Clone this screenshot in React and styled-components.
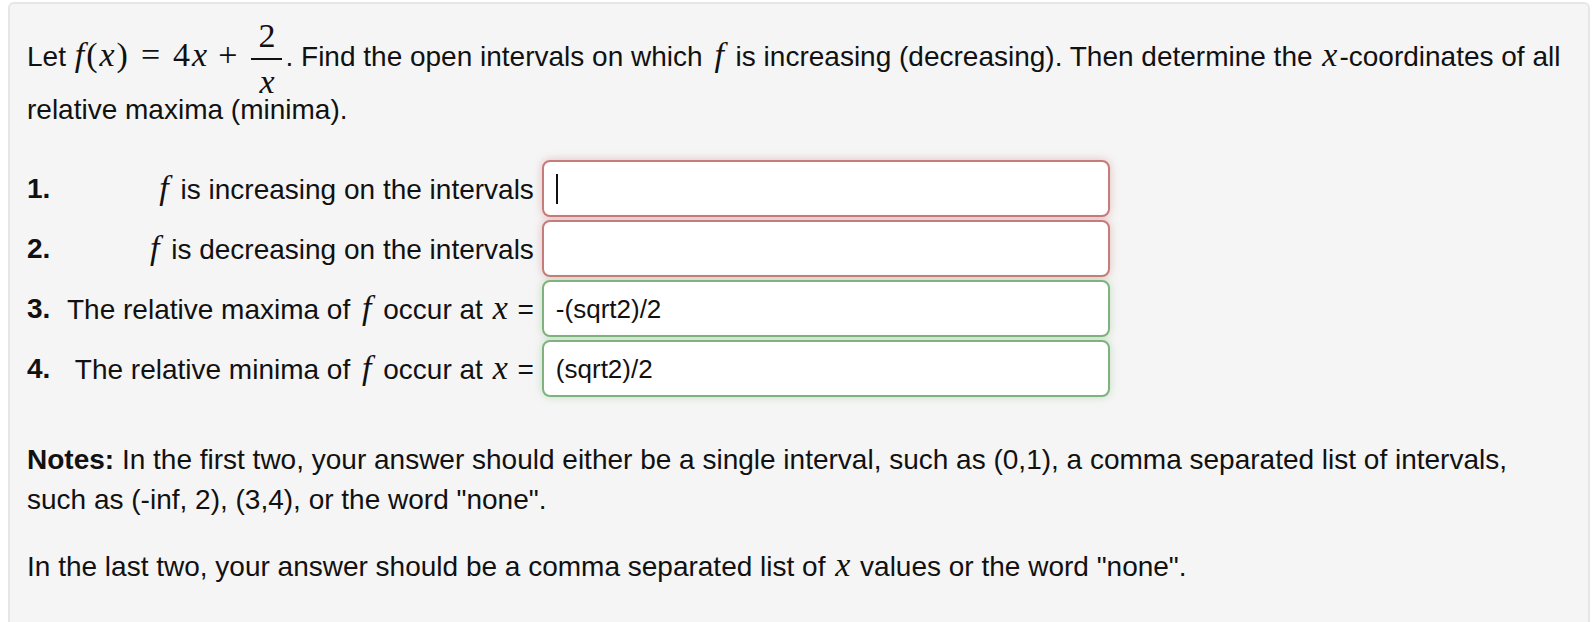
import React from "react"
import styled, { createGlobalStyle } from "styled-components"

const GlobalStyle = createGlobalStyle`
  html, body {
    margin: 0;
    padding: 0;
    background: #ffffff;
  }
  body {
    font-family: "Liberation Sans", Arial, Helvetica, sans-serif;
    color: #111;
  }
`

const rows = [
  { num: "1.", pre: "", post: "is increasing on the intervals", value: "", status: "wrong", caret: true },
  { num: "2.", pre: "", post: "is decreasing on the intervals", value: "", status: "wrong" },
  { num: "3.", pre: "The relative maxima of", post: "occur at", x: true, value: "-(sqrt2)/2", status: "right" },
  { num: "4.", pre: "The relative minima of", post: "occur at", x: true, value: "(sqrt2)/2", status: "right" },
]

const Well = styled.div`
  margin: 2px 5px 0 8px;
  min-height: 640px;
  box-sizing: border-box;
  background: #f5f5f5;
  border: 2px solid #e6e6e6;
  border-bottom: none;
  border-radius: 6px 6px 0 0;
  padding: 24px 18px 0 17px;
  font-size: 28px;
  line-height: 40px;
`

const Para = styled.p`
  margin: 0 0 ${(p) => p.gap || 0}px 0;
`

const M = styled.span`
  font-family: "Liberation Serif", "Times New Roman", serif;
  font-style: ${(p) => (p.up ? "normal" : "italic")};
  font-size: 34px;
  padding: 0 ${(p) => p.pad || 1}px;
`

const Frac = styled.span`
  display: inline-flex;
  flex-direction: column;
  align-items: center;
  vertical-align: middle;
  margin: -8px 3px -8px 4px;
  font-family: "Liberation Serif", "Times New Roman", serif;
  font-size: 34px;
  line-height: 32px;
`

const Num = styled.span`
  padding: 0 6px 6px;
  font-style: normal;
`

const Den = styled.span`
  font-style: italic;
  padding: 6px 8px 0;
  border-top: 2px solid #111;
`

const Grid = styled.div`
  display: grid;
  grid-template-columns: 40px auto 568px;
  justify-content: start;
  align-items: center;
  row-gap: 3px;
  margin-top: 30px;
`

const Index = styled.span`
  font-weight: bold;
`

const Label = styled.span`
  text-align: right;
  padding-right: 8px;
  white-space: nowrap;
`

const Answer = styled.div`
  height: 57px;
  box-sizing: border-box;
  background: #fff;
  border-radius: 8px;
  border: 2px solid ${(p) => (p.status === "wrong" ? "#c67c7a" : "#80b27f")};
  box-shadow: 0 0 8px ${(p) => (p.status === "wrong" ? "rgba(200, 110, 110, 0.4)" : "rgba(110, 180, 110, 0.35)")};
  padding: 0 12px;
  display: flex;
  align-items: center;
  font-size: 26px;
`

const Caret = styled.span`
  width: 2px;
  height: 30px;
  background: #111;
`

const Notes = styled.div`
  margin-top: 43px;
`

export default function App() {
  return (
    <>
      <GlobalStyle />
      <Well>
        <Para>
          Let <M>f</M>
          <M up>(</M>
          <M>x</M>
          <M up>)</M>
          <M up pad={12}>=</M>
          <M up>4</M>
          <M>x</M>
          <M up pad={10}>+</M>
          <Frac>
            <Num>2</Num>
            <Den>x</Den>
          </Frac>
          . Find the open intervals on which <M pad={4}>f</M> is increasing (decreasing). Then determine the <M pad={2}>x</M>-coordinates of all relative maxima (minima).
        </Para>

        <Grid>
          {rows.map((r) => (
            <React.Fragment key={r.num}>
              <Index>{r.num}</Index>
              <Label>
                {r.pre && <>{r.pre} </>}
                <M pad={4}>f</M> {r.post}
                {r.x && (
                  <>
                    {" "}
                    <M pad={2}>x</M> =
                  </>
                )}
              </Label>
              <Answer status={r.status}>
                {r.caret ? <Caret /> : r.value}
              </Answer>
            </React.Fragment>
          ))}
        </Grid>

        <Notes>
          <Para gap={25}>
            <b>Notes:</b> In the first two, your answer should either be a single interval, such as (0,1), a comma separated list of intervals, such as (-inf, 2), (3,4), or the word "none".
          </Para>
          <Para>
            In the last two, your answer should be a comma separated list of <M pad={2}>x</M> values or the word "none".
          </Para>
        </Notes>
      </Well>
    </>
  )
}
